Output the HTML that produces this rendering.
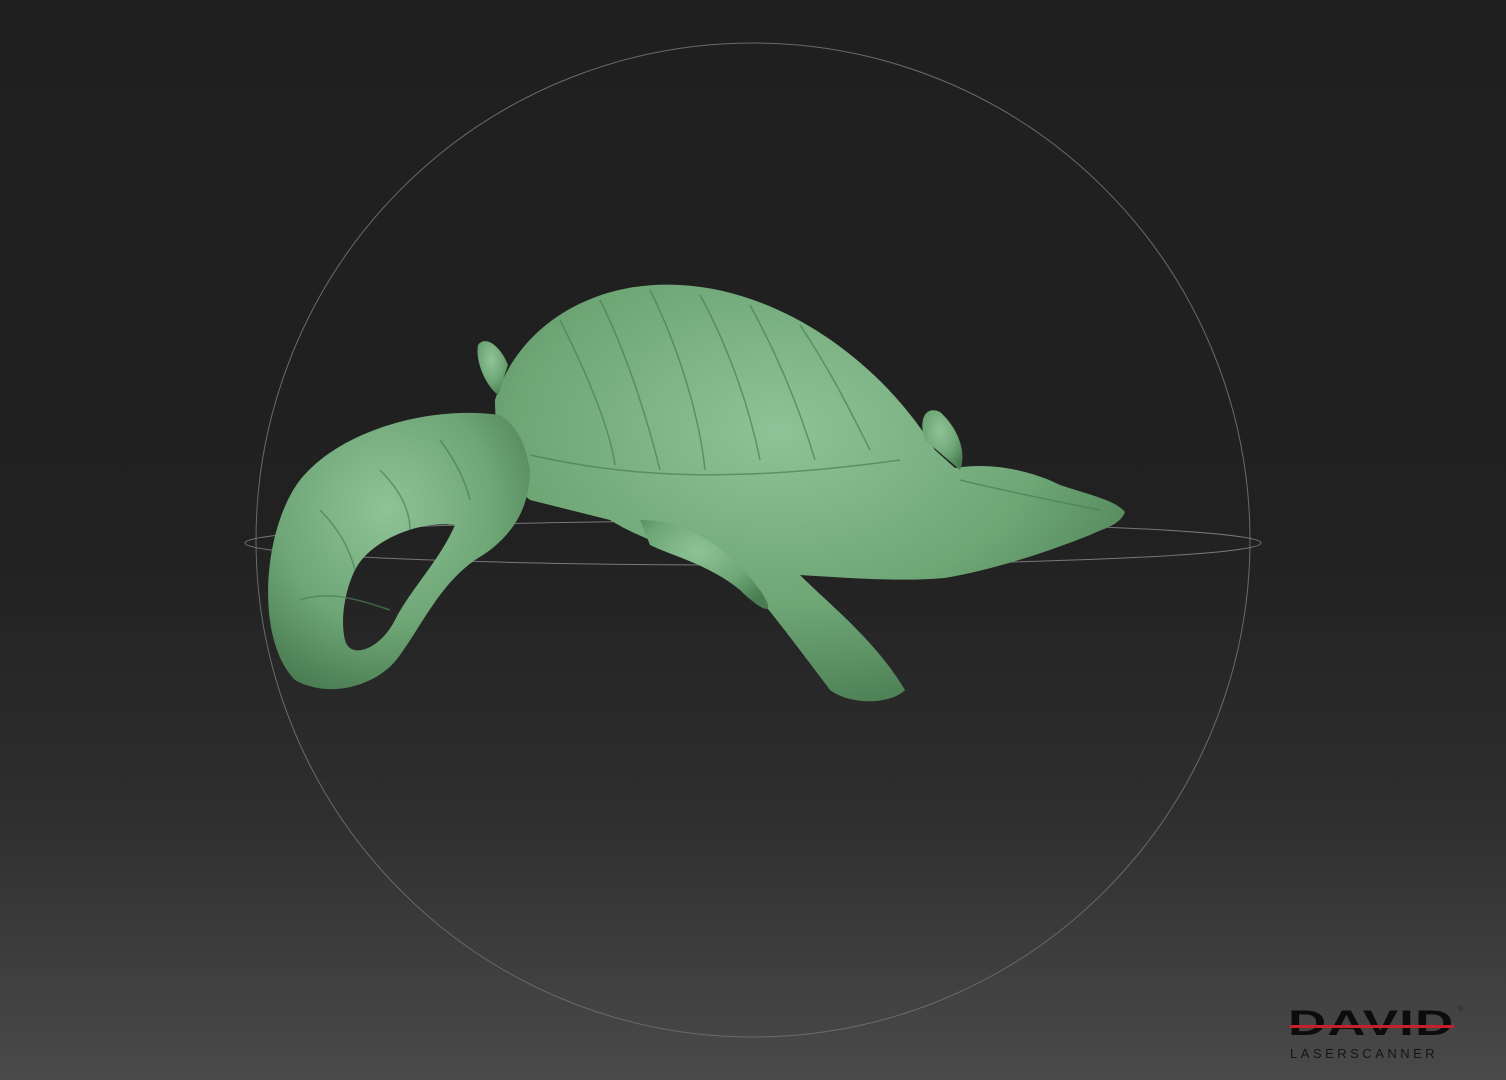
<!DOCTYPE html>
<html><head><meta charset="utf-8"><style>
html,body{margin:0;padding:0}
body{width:1506px;height:1080px;overflow:hidden;background:linear-gradient(#1f1f1f 0%,#212121 50%,#2e2e2e 75%,#4a4a4a 100%);position:relative;font-family:"Liberation Sans",sans-serif}
.d{position:absolute;left:1288px;top:1006px;font-weight:900;font-size:44px;color:#0c0c0c;line-height:44px;letter-spacing:1px;transform:scaleX(1.2) scaleY(0.8);transform-origin:left top}
.red{position:absolute;left:1290px;top:1025px;width:164px;height:3px;background:#c8202a}
.ls{position:absolute;left:1290px;top:1046px;font-size:13px;color:#151515;letter-spacing:3.5px}
.reg{position:absolute;left:1458px;top:1006px;font-size:7px;color:#222}
</style></head><body>
<svg width="1506" height="1080" style="position:absolute;left:0;top:0">
<defs><radialGradient id="g" cx="0.45" cy="0.35" r="0.7"><stop offset="0" stop-color="#8fc397"/><stop offset="0.6" stop-color="#6ea676"/><stop offset="1" stop-color="#4a7d52"/></radialGradient></defs>
<circle cx="753" cy="540" r="497" fill="none" stroke="#6a6a6a" stroke-width="1"/>
<ellipse cx="753" cy="543" rx="508" ry="22" fill="none" stroke="#777" stroke-width="1"/>
<g fill="url(#g)">
<path d="M495 400 C520 320 600 280 680 285 C780 290 880 360 935 450 L955 468 C990 462 1030 470 1060 485 C1090 495 1115 500 1125 512 C1120 525 1105 528 1090 535 C1040 555 990 570 945 578 C900 582 850 578 800 575 C830 605 875 640 905 690 C890 705 850 705 830 690 C800 650 770 610 740 575 C700 555 650 545 610 520 L530 500 C505 480 495 440 495 400 Z"/>
<path d="M500 415 C430 405 340 430 300 480 C262 530 255 640 295 680 C330 700 380 685 400 655 C425 620 440 585 475 560 C510 540 530 510 530 470 C525 440 515 425 500 415 Z M355 570 C370 540 420 520 455 525 C440 560 410 590 395 620 C380 650 350 660 345 640 C340 620 345 590 355 570 Z" fill-rule="evenodd"/>
<path d="M925 440 C918 420 925 405 940 412 C955 425 968 450 960 470 Z"/>
<path d="M478 345 C485 335 500 345 508 365 L498 395 C485 385 475 360 478 345 Z"/>
<path d="M640 520 C690 520 730 550 760 590 C780 620 760 610 740 590 C710 565 670 555 650 545 Z"/>
</g>
<g fill="none" stroke="#4a7f54" stroke-width="1.5" opacity="0.7">
<path d="M600 300 C630 360 650 430 660 470"/><path d="M650 290 C680 350 700 420 705 470"/><path d="M700 295 C730 350 750 410 760 460"/><path d="M750 305 C780 360 800 410 815 460"/><path d="M800 325 C830 370 850 410 870 450"/><path d="M560 320 C590 380 610 430 615 465"/>
<path d="M530 455 C620 475 720 485 900 460"/>
<path d="M300 600 C330 590 360 600 390 610"/><path d="M320 510 C340 530 350 550 355 570"/><path d="M380 470 C400 490 410 510 410 530"/><path d="M440 440 C455 460 465 480 470 500"/>
<path d="M960 480 C1000 490 1050 500 1100 510"/>
</g>
</svg>
<div class="d">DAVID</div>
<div class="red"></div>
<div class="reg">®</div>
<div class="ls">LASERSCANNER</div>
</body></html>
